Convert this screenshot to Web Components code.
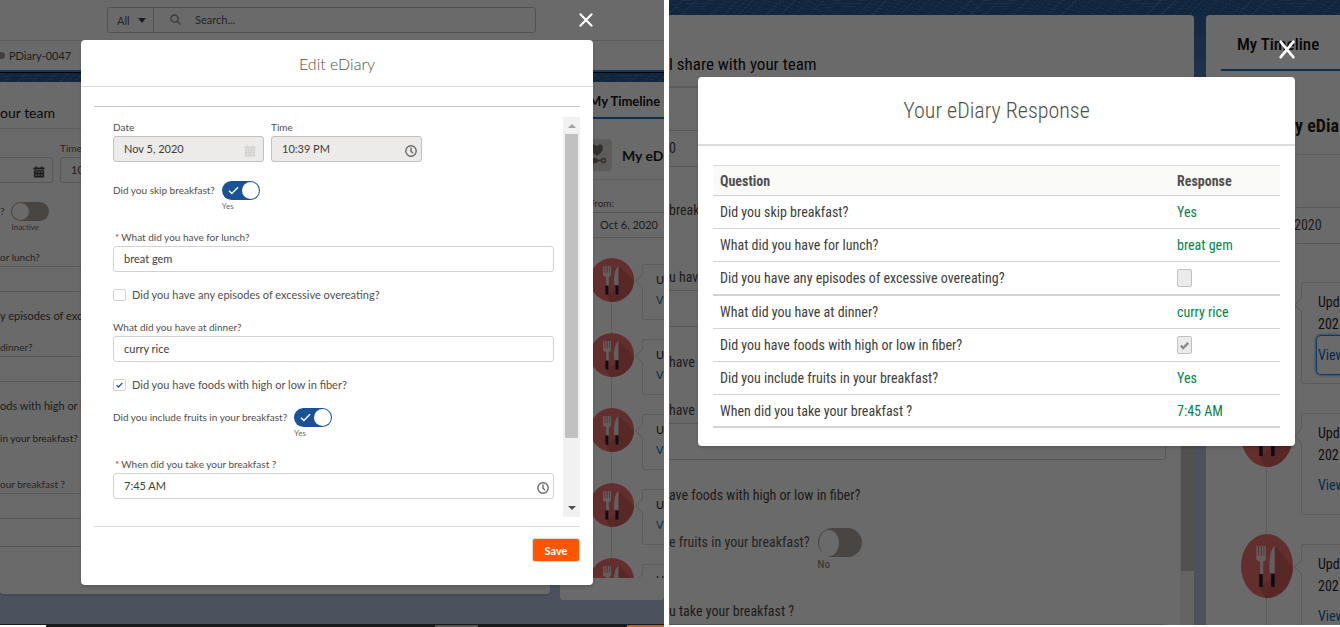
<!DOCTYPE html>
<html lang="en">
<head>
<meta charset="utf-8">
<title>eDiary</title>
<style>
  body { margin: 0; background: #fff; }
  main { display: grid; grid-template-columns: minmax(0, 664fr) 5px minmax(0, 671fr); height: 100vh; overflow: hidden; }
  edit-screen { grid-column: 1; }
  response-screen { grid-column: 3; }
</style>
</head>
<body>
<main>
  <edit-screen></edit-screen>
  <response-screen></response-screen>
</main>
<script>
const define = (name, html, setup) => {
  const template = document.createElement('template');
  template.innerHTML = `<style>*,*::before,*::after{box-sizing:border-box}</style>${html}`;
  customElements.define(name, class extends HTMLElement {
    constructor() {
      super();
      this.attachShadow({ mode: 'open' }).append(template.content.cloneNode(true));
    }
    connectedCallback() {
      if (setup && !this.ready) { this.ready = true; setup(this, this.shadowRoot); }
    }
  });
};

const ICONS = {
  calendar: '<svg viewBox="0 0 12 12" fill="currentColor"><path d="M1 1.6h1.6V.6a.6.6 0 0 1 1.2 0v1h4.4v-1a.6.6 0 0 1 1.2 0v1H11a.6.6 0 0 1 .6.6v1.2H.4V2.200a.6.6 0 0 1 .6-.6z"/><path fill-rule="evenodd" d="M.9 4.200h10.200v6.600a.8.8 0 0 1-.8.8H1.700a.8.8 0 0 1-.8-.8zM2.500 5.500v1.300h1.300V5.500zm2.800 0v1.300h1.300V5.500zm2.800 0v1.300h1.300V5.500zM2.500 8.500v1.300h1.300V8.500zm2.800 0v1.300h1.300V8.500zm2.800 0v1.300h1.300V8.500z"/></svg>',
  clock: '<svg viewBox="0 0 12 12" fill="none" stroke="currentColor" stroke-width="1.400" stroke-linecap="round"><circle cx="6" cy="6" r="5.200"/><path d="M6 3v3.200l1.600 1.600"/></svg>',
  check: '<svg viewBox="0 0 12 10" fill="none" stroke="currentColor" stroke-width="1.500"><path d="M1 5.200l3.200 3.200L11 1.400"/></svg>',
  close: '<svg viewBox="0 0 14 16" preserveAspectRatio="none" fill="none" stroke="currentColor" stroke-width="2.300" stroke-linecap="round"><path d="M1.500 1.500l11 13M12.500 1.500l-11 13"/></svg>'
};

/* A labelled text box with an optional trailing icon */
define('text-field', `
  <style>
    :host { display: block; min-width: 0; color: #3e3e3c; }
    label { display: block; height: 15px; font-size: 10px; line-height: 15px; color: #514f4d; margin-bottom: 1px; white-space: nowrap; }
    i { color: #c23934; font-style: normal; margin: 0 2px; }
    label.none, i.none { display: none; }
    div { position: relative; }
    input { display: block; width: 100%; height: var(--field-h, 26px); padding: 0 10px 2px; border: 1px solid #d4d2d0; border-radius: 3px; background: #fff; color: #3e3e3c; font: inherit; font-size: var(--value, 11px); }
    :host([disabled]) input { background: #ecebea; border-color: #c3c1bf; opacity: 1; }
    span { position: absolute; right: 5px; bottom: 5px; width: 12px; height: 12px; color: #6b6967; }
    :host([faint]) span { color: #d4d2d0; right: 8px; }
    :host([bg]) span { right: 8px; color: #3e3e3c; }
    :host([cutl]) input { border-left: 0; border-radius: 0 3px 3px 0; padding-left: 0; }
    :host([cutr]) input { border-right: 0; border-radius: 3px 0 0 3px; padding-right: 0; }
    svg { display: block; width: 100%; height: 100%; }
  </style>
  <label for="f"><i>*</i><b style="font-weight:400"></b></label>
  <div><input id="f" type="text"><span></span></div>`,
  (el, root) => {
    const label = el.getAttribute('label');
    root.querySelector('b').textContent = label || '';
    if (!label) { root.querySelector('label').className = 'none'; root.querySelector('input').ariaLabel = 'Answer'; }
    if (!el.hasAttribute('required')) root.querySelector('i').className = 'none';
    const input = root.querySelector('input');
    input.value = el.getAttribute('value') || '';
    input.disabled = el.hasAttribute('disabled');
    root.querySelector('span').innerHTML = ICONS[el.getAttribute('icon')] || '';
  });

/* On / off switch: label to the left, state below the track */
define('toggle-switch', `
  <style>
    :host { display: flex; align-items: flex-start; gap: var(--gap, 7px); color: #514f4d; }
    label { font-size: var(--label, 10px); line-height: var(--track-h, 19px); white-space: nowrap; }
    .box { display: grid; gap: 1px; }
    input { appearance: none; display: block; margin: 0; width: var(--track-w, 38px); height: var(--track-h, 19px); border-radius: 15px; background: #a8a39c; grid-area: 1/1; }
    .knob { grid-area: 1/1; align-self: center; margin-left: 1px; width: var(--knob-w, 17px); height: var(--knob-h, 17px); border-radius: 50%; background: #fff; z-index: 1; pointer-events: none; }
    .tick { display: none; grid-area: 1/1; align-self: center; margin-left: 6px; width: 11px; height: 9px; color: #fff; z-index: 1; pointer-events: none; }
    input:checked { background: #1b5297; }
    input:checked ~ .knob { margin-left: 20px; }
    input:checked ~ .tick { display: block; }
    small { font-size: var(--state, 8px); line-height: var(--state-h, 10px); color: #6b6967; }
    svg { display: block; width: 100%; height: 100%; }
  </style>
  <label for="s"></label>
  <div class="box"><input id="s" type="checkbox" role="switch"><span class="knob"></span><span class="tick">${ICONS.check}</span><small></small></div>`,
  (el, root) => {
    root.querySelector('label').textContent = el.getAttribute('label');
    root.querySelector('small').textContent = el.getAttribute('state');
    root.querySelector('input').checked = el.hasAttribute('checked');
  });

define('check-field', `
  <style>
    :host { display: block; }
    label { display: flex; align-items: center; gap: 6px; height: 15px; font-size: 11px; color: #514f4d; white-space: nowrap; }
    .wrap { display: grid; }
    input { appearance: none; grid-area: 1/1; margin: 0; width: 13px; height: 12px; border: 1px solid #d4d2d0; border-radius: 2px; background: #fff; }
    .tick { display: none; grid-area: 1/1; place-self: center; width: 7px; height: 6px; color: #1b5297; z-index: 1; }
    input:checked + .tick { display: block; }
    svg { display: block; width: 100%; height: 100%; stroke-width: 2.200; }
    :host([table]) label { height: 18px; }
    :host([table]) input { width: 15px; height: 18px; background: #ecebea; border-color: #c3c1bf; }
    :host([table]) .tick { width: 9px; height: 9px; color: #8d8b89; }
    :host([table]) svg { stroke-width: 3; }
  </style>
  <label><span class="wrap"><input type="checkbox"><span class="tick">${ICONS.check}</span></span><slot></slot></label>`,
  (el, root) => {
    const input = root.querySelector('input');
    input.checked = el.hasAttribute('checked');
    input.disabled = el.hasAttribute('table');
    if (el.hasAttribute('table')) input.ariaLabel = 'Response';
  });

define('scroll-rail', `
  <style>
    :host { display: flex; flex-direction: column; align-items: center; width: 17px; background: #f1f1f1; }
    b { width: 0; height: 0; border: 4px solid transparent; border-top: 0; border-bottom: 4px solid #a3a3a3; margin: 7px 0 6px; }
    b:last-child { border-bottom: 0; border-top: 4px solid #505050; margin: auto 0 7px; }
    i { width: 13px; height: 76%; background: #c1c1c1; }
  </style><b></b><i></i><b></b>`);

/* Dimmed layer with a dialog on it */
define('modal-dialog', `
  <style>
    :host { position: absolute; inset: 0; z-index: 5; background: rgba(8, 7, 7, .6); display: block; padding: var(--inset); }
    section { position: relative; background: #fff; border-radius: 4px; box-shadow: 0 2px 3px rgba(0, 0, 0, .16); }
    header { height: var(--head-h); border-bottom: var(--head-line) solid #dddbda; display: grid; place-items: center; }
    h2 { margin: 0; font-weight: 300; font-size: var(--title); color: #514f4d; }
    button { position: absolute; right: 0; bottom: calc(100% + var(--close-y)); width: var(--close-w); height: var(--close-h); padding: 0; border: 0; background: none; color: #fff; }
    svg { display: block; width: 100%; height: 100%; }
  </style>
  <section role="dialog"><button type="button" aria-label="Close">${ICONS.close}</button>
  <header><h2><slot name="title"></slot></h2></header><slot></slot></section>`);

define('meal-icon', `
  <style>
    :host { display: block; }
    svg { display: block; width: 100%; height: 100%; }
  </style>
  <svg viewBox="0 0 44 44" preserveAspectRatio="none"><defs><clipPath id="c"><circle cx="22" cy="22" r="22"/></clipPath></defs>
  <g clip-path="url(#c)"><path fill="#ec6b69" d="M0 0h44v44H0z"/><path fill="#d05b59" d="M29 8l22 22v22H25L16 37l9-6z"/></g>
  <path fill="#e8e4e0" d="M13 8h1.300v7h1V8h1.400v7h1V8h1.300v7h.8V8h1.200v9q0 1.500-2.200 2v9h-2.600v-9q-3.200-.5-3.200-2zM28.500 8v19h-3.400l-1-.7q-.8-15 4.400-18.300z"/>
  <path fill="#101c28" d="M15.400 27.500h3v9h-3zM25.500 27.500h3v9h-3z"/></svg>`);

define('timeline-item', `
  <style>
    :host { display: flex; align-items: flex-start; height: var(--pitch); margin-left: var(--rail); background: linear-gradient(#dddbda, #dddbda) var(--line) 0 / 1px 100% no-repeat; }
    meal-icon { flex: none; width: var(--dot-w); height: var(--dot-h); margin-top: var(--dot-y); }
    article { position: relative; flex: 1; min-width: 0; height: var(--card-h); margin-left: 8px; padding: var(--card-pad); border: 1px solid #dddbda; border-right: 0; border-radius: 3px 0 0 3px; background: #fff; white-space: nowrap; font-size: var(--item); line-height: var(--item-lh); color: #181818; }
    article::before { content: ""; position: absolute; left: -6px; top: var(--notch); width: 10px; height: 10px; background: #fff; border: 1px solid #dddbda; border-width: 0 0 1px 1px; transform: rotate(45deg); }
    a { display: block; color: #005fb2; text-decoration: none; margin-top: var(--link-y); }
    :host([focus]) a { border: 1px solid #1589ee; border-right: 0; border-radius: 5px 0 0 5px; box-shadow: 0 0 3px #0070d2; margin: 0 0 0 -2px; padding: 8px 0 8px 1px; }
  </style>
  <meal-icon></meal-icon><article><div><slot></slot></div><a href="#view"></a></article>`,
  (el, root) => { root.querySelector('a').textContent = el.getAttribute('link'); });

const PATTERN = `
  background-color: #1b5592;
  background-image:
    repeating-radial-gradient(ellipse at 20% 160%, transparent 0 7px, rgba(255,255,255,.13) 7px 8px),
    repeating-linear-gradient(135deg, transparent 0 9px, rgba(255,255,255,.1) 9px 10px);
  background-size: 150px 30px, 190px 30px;`;

define('edit-screen', `
  <style>
    :host { position: relative; display: flex; flex-direction: column; min-height: 0; font-family: Lato, "Open Sans", sans-serif; color: #3e3e3c; }
    .stage { position: relative; flex: 1; min-height: 0; overflow: hidden; background: #b0c4df; }
    .top { height: 41px; padding: 7px 128px 0 107px; background: #fff; border-bottom: 1px solid #dddbda; }
    .search { display: flex; height: 26px; border: 1px solid #c3c1bf; border-radius: 3px; align-items: stretch; }
    .all { appearance: none; width: 46px; padding: 0 0 0 9px; border: 0; border-right: 1px solid #c3c1bf; font: inherit; font-size: 11px; color: #514f4d; background: none; }
    .caret { position: relative; display: flex; }
    .caret::after { content: ""; position: absolute; right: 8px; top: 10px; border: 4px solid transparent; border-top: 5px solid #3e3e3c; border-bottom: 0; pointer-events: none; }
    .search svg { width: 11px; height: 11px; margin: 6px 14px 0 16px; flex: none; }
    .search input { flex: 1; min-width: 0; border: 0; padding: 0 0 1px; background: none; font: inherit; font-size: 11px; }
    .search input::placeholder { color: #514f4d; opacity: 1; }
    .tabs { display: flex; align-items: center; gap: 4px; height: 29px; background: #fff; font-size: 11px; }
    .tabs::before { content: ""; width: 5px; height: 7px; background: #9a9896; border-radius: 0 4px 4px 0; }
    .band { height: 12px; border-top: 2px solid #1589ee; box-shadow: inset 0 1px #000; ${PATTERN} }
    .cols { display: flex; gap: 10px; align-items: flex-start; }
    .main { flex: 1; min-width: 0; height: 512px; background: #fff; border-radius: 0 0 4px 4px; box-shadow: 0 2px 2px rgba(0,0,0,.1); font-size: 10px; line-height: 15px; }
    h1 { margin: 0 0 12px; height: 47px; padding-top: 16px; border-bottom: 1px solid #dddbda; font-size: 14px; line-height: 30px; font-weight: 400; color: #080707; }
    .pair { display: flex; gap: 7px; align-items: flex-end; margin-bottom: 19px; }
    .pair :first-child { width: 53px; } .pair :last-child { width: 151px; }
    p { margin: 0; height: 15px; white-space: nowrap; }
    .main > text-field { margin-bottom: 16px; }
    .main p.q { font-size: 11px; }
    .side { width: 104px; background: #fff; height: 518px; border-radius: 0 0 4px 4px; overflow: hidden; }
    h3 { margin: 0 0 20px; height: 37px; padding-left: 29px; border-bottom: 2px solid #0070d2; font-size: 13px; line-height: 38px; white-space: nowrap; color: #080707; }
    .me { display: flex; gap: 10px; padding: 0 0 6px 20px; border-bottom: 1px solid #dddbda; font-size: 14px; line-height: 34px; font-weight: 700; white-space: nowrap; color: #181818; margin-bottom: 16px; }
    .me svg { width: 32px; height: 32px; flex: none; }
    .from { margin-left: 29px; }
    .list { --pitch: 75px; --rail: 30px; --line: 21px; --dot-w: 44px; --dot-h: 44px; --dot-y: -6px; --card-h: 56px; --card-pad: 5px 0 0 13px; --notch: 11px; --item: 11px; --item-lh: 20px; --link-y: 0px; padding-top: 6px; margin-top: 20px; height: 320px; overflow: hidden; }
    modal-dialog { --inset: 40px 71px 0 81px; --head-h: 47px; --head-line: 1px; --title: 16px; --close-y: 13px; --close-w: 14px; --close-h: 14px; }
    form { padding: 19px 13px 23px; }
    .scroll { display: flex; margin: 0 0 9px; }
    .rule { border: 0; border-top: 1px solid #c9c7c5; margin: 0 0 10px; }
    .fields { flex: 1; min-width: 0; height: 400px; padding: 3px 9px 0 19px; display: flex; flex-direction: column; }
    .when { display: flex; gap: 7px; margin-bottom: 19px; } .when text-field { width: 151px; }
    .fields > toggle-switch { margin-bottom: 19px; }
    .fields > text-field { margin-bottom: 15px; }
    .fields > check-field { margin-bottom: 18px; }
    .save { display: block; margin: 11px 0 0 auto; width: 48px; height: 24px; padding: 0; border: 1px solid #dddbda; border-radius: 3px; background: #ff5400; color: #fff; font: 700 11px Lato, sans-serif; }
    .end { margin: 0; border-color: #dddbda; }
    footer { height: 3px; background: linear-gradient(90deg, #fff 7%, transparent 7% 65.500%, #555 65.500% 72%, transparent 72% 94.500%, #b86a1c 94.500%) 0 1px no-repeat #181a1b; }
  </style>
  <div class="stage">
    <div class="top"><div class="search"><span class="caret"><select class="all" aria-label="Search scope"><option>All</option></select></span>
      <svg viewBox="0 0 11 11" fill="none" stroke="#8d8b89" stroke-width="1.500"><circle cx="4.500" cy="4.500" r="3.600"/><path d="M7.200 7.200l3.300 3.300"/></svg>
      <input type="search" placeholder="Search..." aria-label="Search"></div></div>
    <div class="tabs">PDiary-0047</div>
    <div class="band"></div>
    <div class="cols">
      <div class="main">
        <h1>our team</h1>
        <div class="pair"><text-field bg cutl icon="calendar"></text-field><text-field label="Time" value="10"></text-field></div>
        <toggle-switch label="?" state="Inactive"></toggle-switch>
        <text-field cutl label="or lunch?" style="margin-top:18px"></text-field>
        <p class="q">y episodes of exc</p>
        <text-field cutl label="dinner?" style="margin-top:17px"></text-field>
        <p class="q">ods with high or lo</p>
        <p style="margin:18px 0 31px">in your breakfast?</p>
        <text-field cutl label="our breakfast ?" style="margin-bottom:27px"></text-field>
        <hr class="rule">
      </div>
      <div class="side">
        <h3>My Timeline</h3>
        <div class="me"><svg viewBox="0 0 32 32"><rect width="32" height="32" rx="4" fill="#dddbda"/><path fill="#706e6b" d="M17 17q-6-4-6-8t3-3.500q2 0 3 2 1-2 3-2 3-.5 3 3.500t-6 8z"/><g fill="none" stroke="#706e6b" stroke-width="1.500"><path d="M8 21.500h13"/><circle cx="23.500" cy="21.500" r="2"/></g><circle cx="15" cy="21.500" r="2.800" fill="#706e6b"/></svg>My eD</div>
        <text-field class="from" cutr label="From:" value="Oct 6, 2020"></text-field>
        <div class="list">
          <timeline-item link="V">U</timeline-item><timeline-item link="V">U</timeline-item><timeline-item link="V">U</timeline-item><timeline-item link="V">U</timeline-item><timeline-item link="">U</timeline-item>
        </div>
      </div>
    </div>
    <modal-dialog>
      <span slot="title">Edit eDiary</span>
      <form onsubmit="return false">
        <hr class="rule">
        <div class="scroll">
          <div class="fields">
            <div class="when"><text-field disabled faint label="Date" value="Nov 5, 2020" icon="calendar"></text-field><text-field disabled label="Time" value="10:39 PM" icon="clock"></text-field></div>
            <toggle-switch checked label="Did you skip breakfast?" state="Yes"></toggle-switch>
            <text-field required label="What did you have for lunch?" value="breat gem"></text-field>
            <check-field>Did you have any episodes of excessive overeating?</check-field>
            <text-field label="What did you have at dinner?" value="curry rice"></text-field>
            <check-field checked style="margin-bottom:16px">Did you have foods with high or low in fiber?</check-field>
            <toggle-switch checked label="Did you include fruits in your breakfast?" state="Yes"></toggle-switch>
            <text-field required label="When did you take your breakfast ?" value="7:45 AM" icon="clock"></text-field>
          </div>
          <scroll-rail></scroll-rail>
        </div>
        <hr class="rule end">
        <button class="save" type="submit">Save</button>
      </form>
    </modal-dialog>
  </div>
  <footer></footer>`);

define('response-table', `
  <style>
    :host { display: block; padding: 19px 15px 18px; }
    table { width: 100%; border-spacing: 0; border-top: 1px solid #dddbda; table-layout: fixed; color: #3e3e3c; }
    th, td { height: 33px; padding: 0 7px; border-bottom: 1px solid #d4d2d0; text-align: left; font-size: 14px; line-height: 20px; }
    th { height: 30px; background: #fafaf9; color: #514f4d; }
    th:last-child { width: 110px; }
    td:last-child { color: #04844b; padding-right: 0; }
    tr.thick td { border-bottom-width: 2px; }
    tr.tall td { height: 34px; }
  </style>
  <table>
    <thead><tr><th>Question</th><th>Response</th></tr></thead>
    <tbody>
      <tr><td>Did you skip breakfast?</td><td>Yes</td></tr>
      <tr><td>What did you have for lunch?</td><td>breat gem</td></tr>
      <tr class="thick tall"><td>Did you have any episodes of excessive overeating?</td><td><check-field table></check-field></td></tr>
      <tr><td>What did you have at dinner?</td><td>curry rice</td></tr>
      <tr><td>Did you have foods with high or low in fiber?</td><td><check-field table checked></check-field></td></tr>
      <tr><td>Did you include fruits in your breakfast?</td><td>Yes</td></tr>
      <tr class="thick"><td>When did you take your breakfast ?</td><td>7:45 AM</td></tr>
    </tbody>
  </table>`);

define('response-screen', `
  <style>
    :host { display: block; min-height: 0; padding-bottom: 2px; font-family: "Roboto Condensed", Roboto, sans-serif; color: #3e3e3c; }
    .stage { position: relative; height: 100%; overflow: hidden; background: linear-gradient(#1b5592, #4a78b4 80px, #b0c4df 420px); }
    .band { height: 15px; ${PATTERN} }
    .cols { display: flex; gap: 12px; --field-h: 37px; --value: 14px; }
    .main { flex: 1; min-width: 0; height: 640px; background: #fff; border-radius: 0 4px 0 0; font-size: 14px; line-height: 20px; }
    h1 { margin: 0; height: 73px; padding-top: 34px; border-bottom: 2px solid #dddbda; font-size: 17px; line-height: 30px; font-weight: 400; color: #080707; }
    .body { display: flex; height: 567px; }
    .fields { flex: 1; min-width: 0; padding: 42px 14px 0 0; }
    p { margin: 0; white-space: nowrap; }
    text-field { margin-top: 3px; }
    toggle-switch { --label: 14px; --gap: 8px; --track-w: 44px; --track-h: 29px; --knob-w: 20px; --knob-h: 26px; --state: 11px; --state-h: 14px; margin: 23px 0 29px; }
    .rail { width: 14px; background: #f1f1f1; }
    .rail i { display: block; width: 13px; height: 483px; margin-left: auto; background: #c1c1c1; }
    .side { width: 134px; background: #fff; border-radius: 4px 0 0 0; overflow: hidden; white-space: nowrap; }
    h3 { margin: 0 0 0 15px; height: 56px; padding: 14px 0 0 16px; border-bottom: 2px solid #0070d2; font-size: 17px; line-height: 30px; font-weight: 500; color: #080707; }
    h4 { margin: 0 0 52px; height: 84px; padding: 40px 0 0 89px; border-bottom: 1px solid #dddbda; font-size: 18px; line-height: 30px; color: #181818; }
    .to { margin: 0 0 0 88px; }
    .list { margin-top: 38px; --pitch: 131px; --rail: 35px; --line: 25px; --dot-w: 52px; --dot-h: 64px; --dot-y: -10px; --card-h: 102px; --card-pad: 8px 0 0 16px; --notch: 17px; --item: 14px; --item-lh: 22px; --link-y: 8px; }
    modal-dialog { --inset: 77px 45px 0 29px; --head-h: 69px; --head-line: 2px; --title: 22px; --close-y: 18px; --close-w: 16px; --close-h: 19px; }
  </style>
  <div class="stage">
    <div class="band"></div>
    <div class="cols">
      <div class="main">
        <h1>l share with your team</h1>
        <div class="body">
          <div class="fields">
            <text-field cutl value="0" style="margin-top:0"></text-field>
            <p style="margin-top:33px">breakfa</p>
            <p style="margin-top:47px">u have</p>
            <text-field cutl></text-field>
            <p style="margin-top:25px">have a</p>
            <p style="margin-top:28px">have a</p>
            <text-field cutl></text-field>
            <p style="margin-top:25px">ave foods with high or low in fiber?</p>
            <toggle-switch label="e fruits in your breakfast?" state="No"></toggle-switch>
            <p>u take your breakfast ?</p>
            <text-field cutl></text-field>
          </div>
          <div class="rail"><i></i></div>
        </div>
      </div>
      <div class="side">
        <h3>My Timeline</h3>
        <h4>y eDia</h4>
        <text-field class="to" cutl cutr value="2020"></text-field>
        <div class="list">
          <timeline-item focus link="View">Upd<br>202</timeline-item><timeline-item link="View">Upd<br>202</timeline-item><timeline-item link="View">Upd<br>202</timeline-item>
        </div>
      </div>
    </div>
    <modal-dialog>
      <span slot="title">Your eDiary Response</span>
      <response-table></response-table>
    </modal-dialog>
  </div>`);
</script>
</body>
</html>
